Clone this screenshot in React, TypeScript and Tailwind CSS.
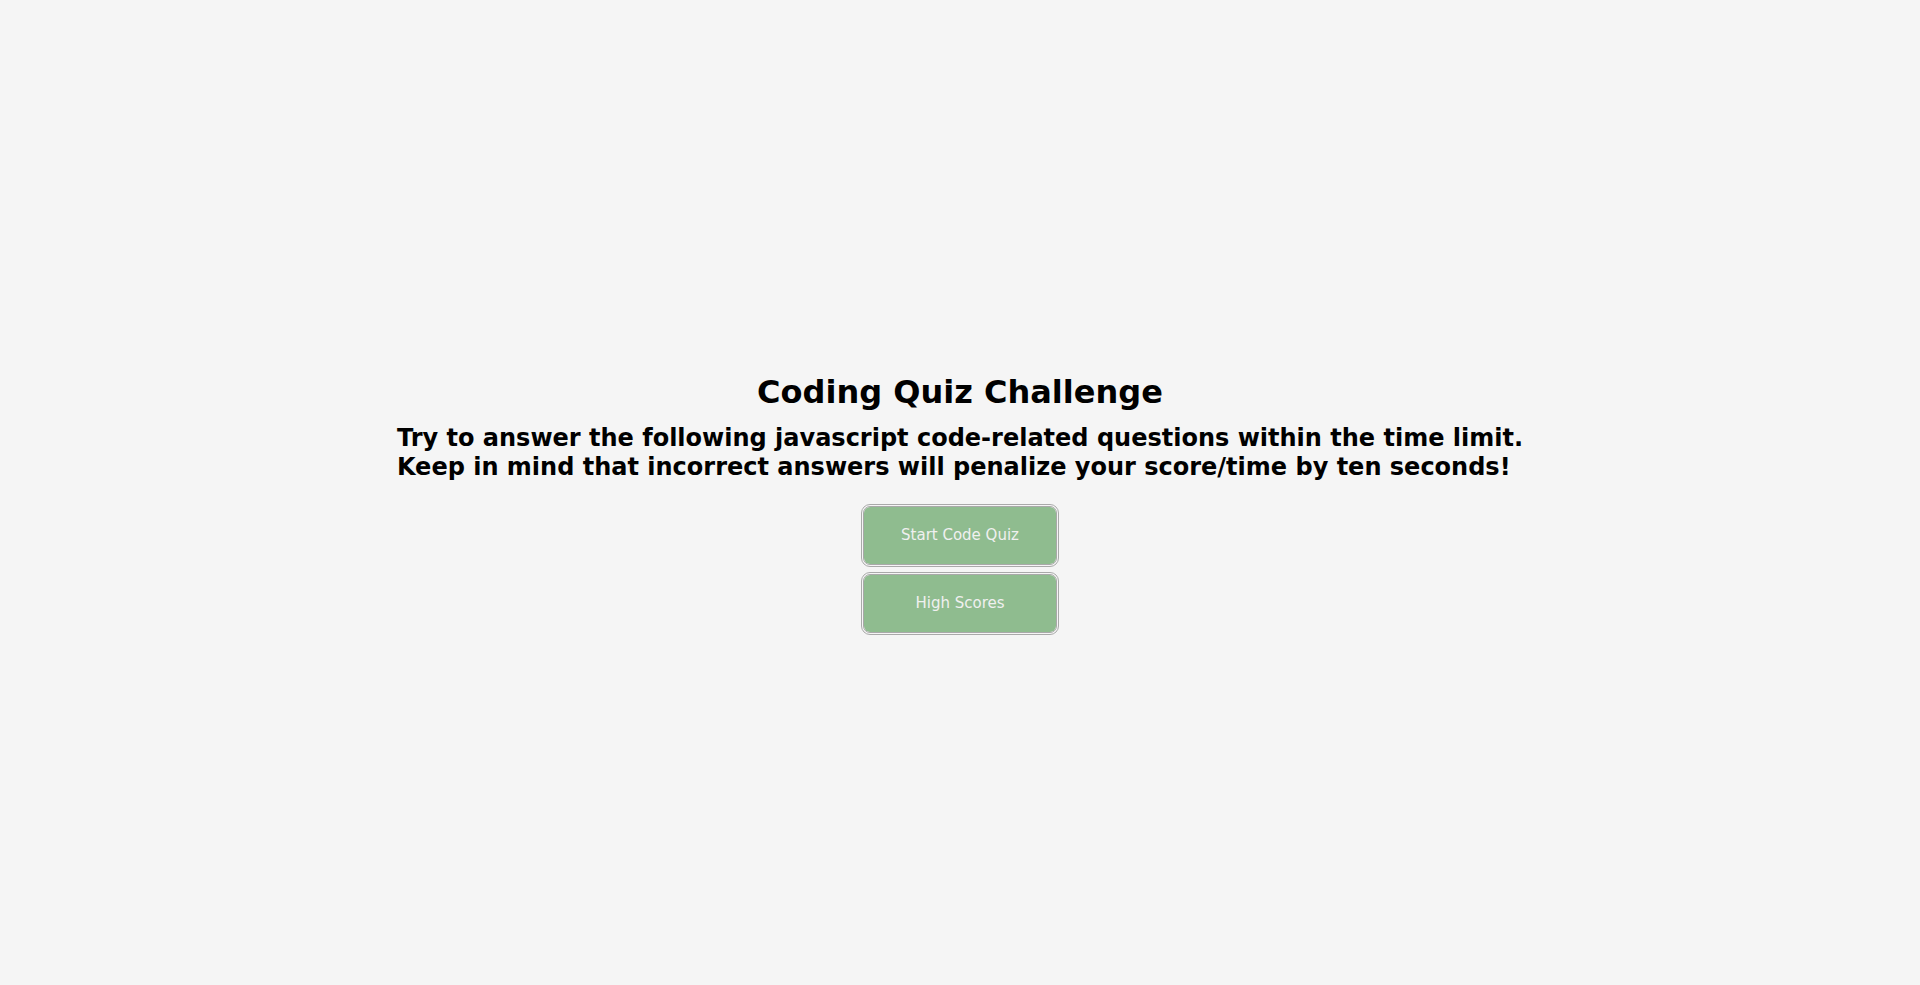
export default function App() {
  return (
    <div
      className="min-h-[985px] w-full bg-[#f5f5f5] flex flex-col items-center pt-[374px] text-black"
      style={{ fontFamily: '"DejaVu Sans", Verdana, sans-serif' }}
    >
      <h1 className="text-[32px] font-bold leading-[37px] text-center">Coding Quiz Challenge</h1>
      <h2 className="mt-[13px] text-[24px] font-bold leading-[29px] text-left">
        Try to answer the following javascript code-related questions within the time limit.
        <br />
        Keep in mind that incorrect answers will penalize your score/time by ten seconds!
      </h2>
      <div className="mt-[22px] flex flex-col items-center gap-[5px]">
        <button className="w-[198px] h-[63px] rounded-[9px] border-[3px] border-double border-[#a9a9a9] bg-[#8fbc8f] bg-clip-padding text-[#f0f0f0] text-[15px]">
          Start Code Quiz
        </button>
        <button className="w-[198px] h-[63px] rounded-[9px] border-[3px] border-double border-[#a9a9a9] bg-[#8fbc8f] bg-clip-padding text-[#f0f0f0] text-[15px]">
          High Scores
        </button>
      </div>
    </div>
  );
}
